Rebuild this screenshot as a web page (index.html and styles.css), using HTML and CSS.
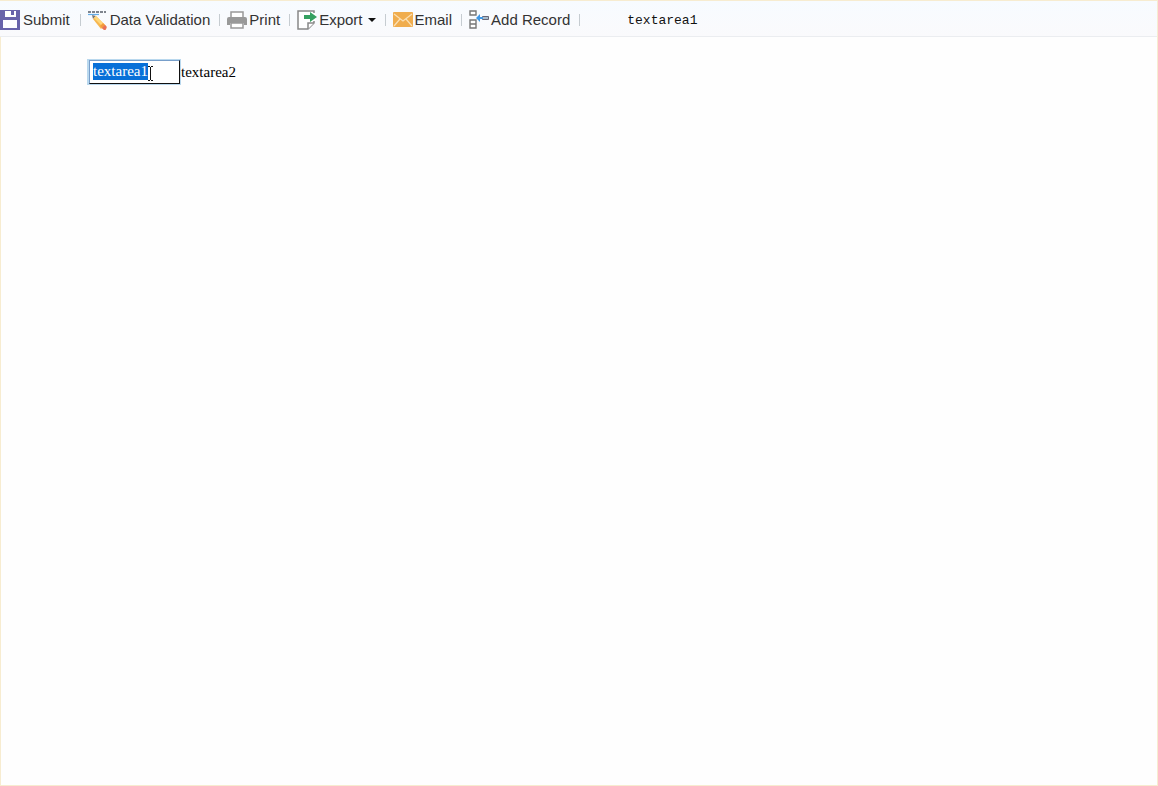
FILE: index.html
```html
<!DOCTYPE html>
<html lang="en">
<head>
<meta charset="utf-8">
<title>Form</title>
<link rel="stylesheet" href="styles.css">
</head>
<body>
<div class="page">
  <header class="toolbar">
    <button class="tool tool-primary" type="button">
      <svg class="icon" viewBox="0 0 20 20" aria-hidden="true"><path fill="#6964aa" d="M0 0h20v20H0z"/><path fill="#fff" d="M5 1h11v6H5zM3 10h14v8H3z"/><path fill="#6964aa" d="M11 1h3v4h-3z"/></svg>
      <span>Submit</span>
    </button>
    <button class="tool" type="button">
      <svg class="icon" viewBox="0 0 20 20" aria-hidden="true"><path stroke="#555d68" stroke-width="1.500" stroke-dasharray="3 1" d="M0 2h18"/><path stroke="#64aee8" stroke-width="1.200" d="M0 4.500h11"/><path fill="#777" d="M4 5l4 1-3 3z"/><path fill="#f7b750" d="M8 6l9 9-4 4-8-10z"/><path fill="#ffd77a" d="M8 6l9 9-2 2L6 8z"/><path fill="#f39a3d" d="M15 13l3 3q1 1 0 3t-3 0l-3-3z"/><path fill="#e8705a" d="M17 15l1 1q1 1 0 3t-3 0l-1-1z"/></svg>
      <span>Data Validation</span>
    </button>
    <button class="tool" type="button">
      <svg class="icon" viewBox="0 0 20 20" aria-hidden="true"><path fill="#fff" stroke="#999" stroke-width="1.500" d="M4 8V2h12v6"/><path fill="#999" d="M2 7h16q2 0 2 2v6h-3v-2H3v2H0V9q0-2 2-2z"/><path fill="#fff" stroke="#999" stroke-width="1.500" d="M4 13h12v5H4z"/></svg>
      <span>Print</span>
    </button>
    <button class="tool" type="button">
      <svg class="icon" viewBox="0 0 20 20" aria-hidden="true"><path fill="#fff" stroke="#888" stroke-width="1.500" d="M1 1h16v12l-6 6H1z"/><path fill="#fff" stroke="#888" stroke-width="1.500" d="M11 19v-6h6"/><path fill="#fff" d="M15 3h4v8h-4z"/><path fill="#35a060" d="M7 5h6V2l7 5-7 5V9H7z"/></svg>
      <span>Export</span>
      <svg class="caret" viewBox="0 0 8 4" aria-hidden="true"><path fill="#111" d="M0 0h8L4 4z"/></svg>
    </button>
    <button class="tool" type="button">
      <svg class="icon" viewBox="0 0 20 20" aria-hidden="true"><rect y="2" width="20" height="15" rx="1" fill="#f0ad4e"/><path fill="none" stroke="#fbe0b4" stroke-width="1.200" d="M1 4l9 7 9-7M1 16l6-7M19 16l-6-7"/></svg>
      <span>Email</span>
    </button>
    <button class="tool" type="button">
      <svg class="icon" viewBox="0 0 20 20" aria-hidden="true"><path fill="#fff" stroke="#777" stroke-width="1.400" d="M1 1h6v4H1zM1 10h6v8H1zM1 14h6"/><path fill="#a9bccb" stroke="#667" d="M13.500 6.500h6v3h-6z"/><path fill="#3f97e5" d="M7 8l4-4v3h3v2h-3v3z"/></svg>
      <span>Add Record</span>
    </button>
    <span class="field-name">textarea1</span>
  </header>
  <main class="sheet">
    <div class="cell cell-active">
      <input class="editor" type="text" value="textarea1" aria-label="Cell value">
      <svg class="pointer" viewBox="0 0 7 15" aria-hidden="true"><path fill="none" stroke="#111" d="M1 .5h2M4 .5h2M3.500 1v13M1 14.500h2M4 14.500h2"/></svg>
    </div>
    <div class="cell">textarea2</div>
  </main>
</div>
<script src="script.js"></script>
</body>
</html>
```
FILE: styles.css
```css
* { box-sizing: border-box; }
body { margin: 0; background: #fefefe; }
.page {
  min-height: 100vh;
  border: 1px solid #f7ecd0;
  background: #fefefe;
}
.toolbar {
  display: flex;
  align-items: center;
  height: 36px;
  margin-left: -1px;
  background: linear-gradient(#f7fbff, #fafafc);
  border-bottom: 1px solid #ebedf0;
}
.tool {
  display: flex;
  align-items: center;
  gap: 2px;
  height: 20px;
  margin: 2px 7px 0 0;
  padding: 0;
  border: 0;
  background: none;
  color: #333;
  font: 15px/20px "Liberation Sans", Arial, sans-serif;
  white-space: nowrap;
}
.tool-primary { gap: 3px; }
.tool::after {
  content: "";
  width: 1px;
  height: 12px;
  margin-left: 7px;
  background: #c6ccd1;
}
.icon { width: 20px; height: 20px; flex: none; }
.caret { width: 8px; height: 4px; margin-left: 3px; }
.field-name {
  margin: 4px 0 0 40px;
  color: #111;
  font: 13px/16px "Liberation Mono", "Courier New", monospace;
}
.sheet {
  display: flex;
  align-items: center;
  padding: 21px 86px;
  color: #000;
  font: 15px/28px "Liberation Serif", "Times New Roman", serif;
}
.cell-active { position: relative; width: 94px; padding: 0 1px 0 2px; }
.editor {
  display: block;
  width: 100%;
  height: 24px;
  padding: 0 3px 2px;
  border: 1px solid;
  border-color: #789fca #111 #111 #789fca;
  outline: 1px solid #b9d8ee;
  box-shadow: -1px 0 0 1px #b9d8ee;
  background: #fff;
  color: #000;
  font: inherit;
  line-height: 17px;
}
.editor::selection { background: #0870d8; color: #fff; }
.pointer { position: absolute; left: 60px; top: 6px; width: 7px; height: 15px; }
```
FILE: script.js
```js
const editor = document.querySelector(".editor");
editor.focus();
editor.select();
```
